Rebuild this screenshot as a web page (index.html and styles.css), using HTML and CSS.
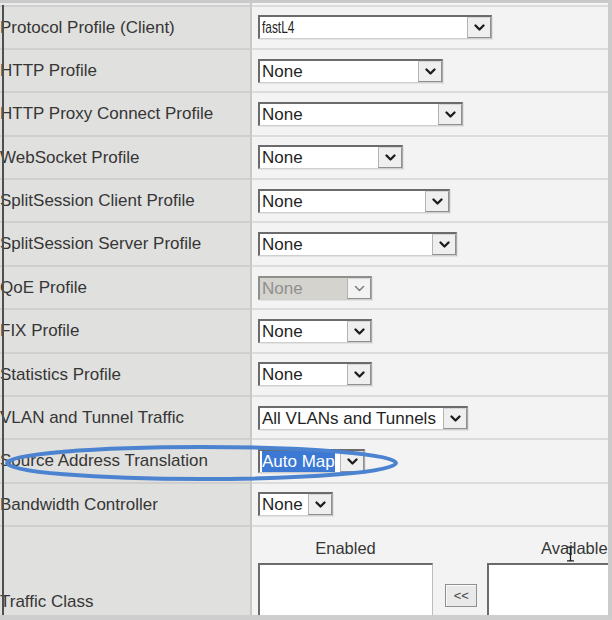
FILE: index.html
```html
<!DOCTYPE html>
<html>
<head>
<meta charset="utf-8">
<title>Profiles</title>
<link rel="stylesheet" href="styles.css">
</head>
<body>
<div class="frame">
  <div class="rows">
    <div class="row stub"><div class="lbl"></div><div class="val"></div></div>

    <div class="row">
      <div class="lbl">Protocol Profile (Client)</div>
      <div class="val"><div class="sel w-234"><span class="txt"><span class="narrow">fastL4</span></span><span class="arr"><svg viewBox="0 0 11 7"><polyline points="1.5,1.5 5.5,5.5 9.5,1.5"/></svg></span></div></div>
    </div>

    <div class="row">
      <div class="lbl">HTTP Profile</div>
      <div class="val"><div class="sel w-185"><span class="txt">None</span><span class="arr"><svg viewBox="0 0 11 7"><polyline points="1.5,1.5 5.5,5.5 9.5,1.5"/></svg></span></div></div>
    </div>

    <div class="row">
      <div class="lbl">HTTP Proxy Connect Profile</div>
      <div class="val"><div class="sel w-205"><span class="txt">None</span><span class="arr"><svg viewBox="0 0 11 7"><polyline points="1.5,1.5 5.5,5.5 9.5,1.5"/></svg></span></div></div>
    </div>

    <div class="row">
      <div class="lbl">WebSocket Profile</div>
      <div class="val"><div class="sel w-145"><span class="txt">None</span><span class="arr"><svg viewBox="0 0 11 7"><polyline points="1.5,1.5 5.5,5.5 9.5,1.5"/></svg></span></div></div>
    </div>

    <div class="row">
      <div class="lbl">SplitSession Client Profile</div>
      <div class="val"><div class="sel w-192"><span class="txt">None</span><span class="arr"><svg viewBox="0 0 11 7"><polyline points="1.5,1.5 5.5,5.5 9.5,1.5"/></svg></span></div></div>
    </div>

    <div class="row">
      <div class="lbl">SplitSession Server Profile</div>
      <div class="val"><div class="sel w-199"><span class="txt">None</span><span class="arr"><svg viewBox="0 0 11 7"><polyline points="1.5,1.5 5.5,5.5 9.5,1.5"/></svg></span></div></div>
    </div>

    <div class="row">
      <div class="lbl">QoE Profile</div>
      <div class="val"><div class="sel w-114 off"><span class="txt">None</span><span class="arr"><svg viewBox="0 0 11 7"><polyline points="1.5,1.5 5.5,5.5 9.5,1.5"/></svg></span></div></div>
    </div>

    <div class="row">
      <div class="lbl">FIX Profile</div>
      <div class="val"><div class="sel w-114"><span class="txt">None</span><span class="arr"><svg viewBox="0 0 11 7"><polyline points="1.5,1.5 5.5,5.5 9.5,1.5"/></svg></span></div></div>
    </div>

    <div class="row">
      <div class="lbl">Statistics Profile</div>
      <div class="val"><div class="sel w-114"><span class="txt">None</span><span class="arr"><svg viewBox="0 0 11 7"><polyline points="1.5,1.5 5.5,5.5 9.5,1.5"/></svg></span></div></div>
    </div>

    <div class="row">
      <div class="lbl">VLAN and Tunnel Traffic</div>
      <div class="val"><div class="sel w-210"><span class="txt">All VLANs and Tunnels</span><span class="arr"><svg viewBox="0 0 11 7"><polyline points="1.5,1.5 5.5,5.5 9.5,1.5"/></svg></span></div></div>
    </div>

    <div class="row">
      <div class="lbl">Source Address Translation</div>
      <div class="val"><div class="sel w-107"><span class="txt"><span class="hl">Auto Map</span></span><span class="arr"><svg viewBox="0 0 11 7"><polyline points="1.5,1.5 5.5,5.5 9.5,1.5"/></svg></span></div></div>
    </div>

    <div class="row">
      <div class="lbl">Bandwidth Controller</div>
      <div class="val"><div class="sel w-75"><span class="txt">None</span><span class="arr"><svg viewBox="0 0 11 7"><polyline points="1.5,1.5 5.5,5.5 9.5,1.5"/></svg></span></div></div>
    </div>

    <div class="row tall">
      <div class="lbl">Traffic Class</div>
      <div class="val">
        <div class="tc">
          <div class="col">
            <div class="hd">Enabled</div>
            <div class="list"></div>
          </div>
          <div class="mv">&lt;&lt;</div>
          <div class="col">
            <div class="hd">Available</div>
            <div class="list"></div>
          </div>
        </div>
      </div>
    </div>
  </div>

  <span class="edge"></span>
  <svg class="ring" viewBox="0 0 404 40"><ellipse cx="201.5" cy="20" rx="194.5" ry="16"/></svg>
  <svg class="ibeam" viewBox="0 0 9 16"><path d="M1 1.2h2.3c.7 0 1.2.4 1.2 1.1V13.7c0 .7.5 1.1 1.2 1.1H8M8 1.2H5.7c-.7 0-1.2.4-1.2 1.1M4.5 13.7c0 .7-.5 1.1-1.2 1.1H1M3 8h3"/></svg>
</div>
</body>
</html>
```
FILE: styles.css
```css
* { box-sizing: border-box; }

body {
  margin: 0;
  background: #ffffff;
  font-family: "Liberation Sans", Arial, sans-serif;
}

.frame {
  position: relative;
  width: 612px;
  height: 620px;
  overflow: hidden;
  background: #f3f3f3;
  border-top: 3px solid #c9c9c9;
  border-right: 4px solid #cbcbcb;
  border-bottom: 5px solid #cecece;
}

.rows {
  display: flex;
  flex-direction: column;
}

.row {
  display: flex;
  flex: none;
  height: 43.4px;
}

.row.stub { height: 3.5px; }
.row.tall { height: 110px; }

.lbl {
  flex: none;
  width: 251.5px;
  background: #e0e0de;
  border-right: 2px solid #c8c8c8;
  border-bottom: 2px solid #cfcfcd;
  font-size: 17px;
  line-height: 41.4px;
  color: #363636;
  white-space: nowrap;
}

.stub .lbl { background: #ebebeb; }
.stub .val { background: #f6f6f6; }

.val {
  flex: 1;
  min-width: 0;
  display: flex;
  align-items: center;
  padding-left: 6.5px;
  background: #f3f3f3;
  border-bottom: 2px solid #dcdcdc;
}

/* select-like control */
.sel {
  display: flex;
  height: 24px;
  background: #ffffff;
  border-top: 2px solid #6b6b6b;
  border-left: 2px solid #6b6b6b;
  border-right: 1px solid #a9a9a9;
  border-bottom: 1px solid #cfcfcf;
  box-shadow: 1px 1px 0 #e3e3e3;
  font-size: 17px;
  color: #1f1f1f;
}

.w-234 { width: 234px; }
.w-185 { width: 185px; }
.w-205 { width: 205px; }
.w-145 { width: 145px; }
.w-192 { width: 192px; }
.w-199 { width: 199px; }
.w-114 { width: 114px; }
.w-210 { width: 210px; }
.w-107 { width: 107px; }
.w-75  { width: 75px; }

.txt {
  flex: 1;
  min-width: 0;
  padding-left: 2px;
  line-height: 21px;
  white-space: nowrap;
  overflow: hidden;
}

.narrow {
  display: inline-block;
  transform: scaleX(0.7);
  transform-origin: 0 50%;
}

.hl {
  display: inline-block;
  background: #3b79d5;
  color: #ffffff;
  line-height: 21px;
}

.arr {
  flex: none;
  width: 24px;
  display: flex;
  align-items: center;
  justify-content: center;
  background: #efefef;
  border-left: 1px solid #b3b3b3;
  border-top: 1px solid #d6d6d6;
  border-right: 1px solid #8f8f8f;
  border-bottom: 1px solid #8f8f8f;
}

.arr svg {
  width: 11px;
  height: 7px;
}

.arr polyline {
  fill: none;
  stroke: #1c1c1c;
  stroke-width: 2.3;
  stroke-linecap: round;
  stroke-linejoin: round;
}

.sel.off {
  background: #d5d3cd;
  color: #8f8f8f;
  border-top-color: #8e8e8e;
  border-left-color: #8e8e8e;
}

.sel.off .arr { background: #f3f3f3; }
.sel.off .arr polyline { stroke: #7c7c7c; stroke-width: 1.5; }

/* traffic class row */
.tall .lbl {
  line-height: 19.5px;
  padding-top: 64.6px;
}

.tall .val {
  display: block;
  padding-top: 12.3px;
}

.tc {
  display: flex;
  align-items: flex-start;
}

.col {
  flex: none;
  width: 175px;
}

.hd {
  text-align: center;
  font-size: 16.5px;
  line-height: 19.5px;
  color: #363636;
  white-space: nowrap;
}

.list {
  margin-top: 4px;
  height: 90px;
  background: #ffffff;
  border-top: 2px solid #6b6b6b;
  border-left: 2px solid #6b6b6b;
  border-right: 1px solid #bdbdbd;
}

.mv {
  flex: none;
  width: 32px;
  height: 23px;
  margin: 44.4px 9.5px 0 12.3px;
  display: flex;
  align-items: center;
  justify-content: center;
  background: #e9e9e9;
  border: 1px solid #8f8f8f;
  box-shadow: inset 1px 1px 0 #fafafa;
  font-size: 13px;
  color: #444444;
}

/* overlays */
.edge {
  position: absolute;
  left: 2px;
  top: 2px;
  bottom: 0;
  width: 1.5px;
  background: #4f4f4f;
}

.ring {
  position: absolute;
  left: 0;
  top: 440px;
  width: 404px;
  height: 40px;
}

.ring ellipse {
  fill: none;
  stroke: #4b83d1;
  stroke-width: 4;
}

.ibeam {
  position: absolute;
  left: 566px;
  top: 543px;
  width: 9px;
  height: 16px;
}

.ibeam path {
  fill: none;
  stroke: #222222;
  stroke-width: 1.3;
}
```
